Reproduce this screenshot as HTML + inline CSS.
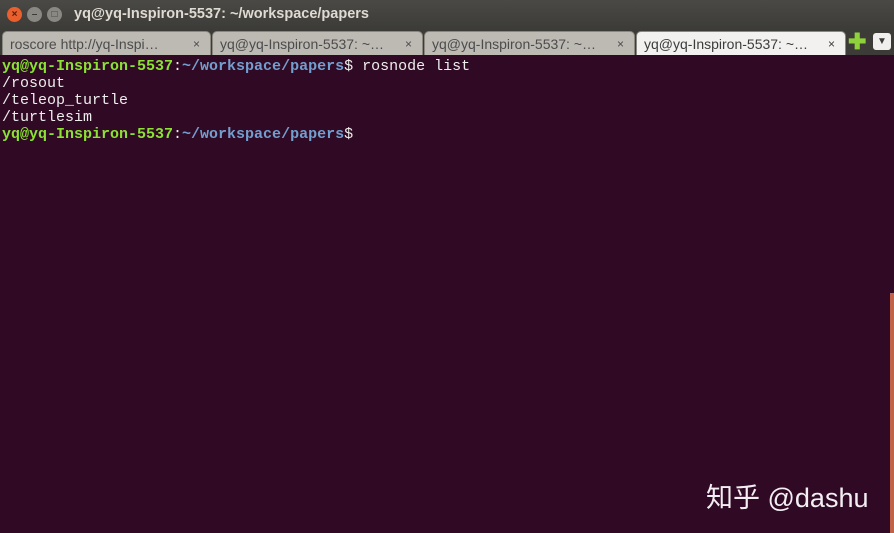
<!DOCTYPE html>
<html><head><meta charset="utf-8"><style>
body{margin:0;width:894px;height:533px;overflow:hidden;background:#300a24;font-family:"Liberation Sans",sans-serif;position:relative}
.title{position:absolute;left:0;top:0;width:894px;height:30px;background:linear-gradient(#4a4945,#3c3b37);}
.title .t{position:absolute;left:74px;top:6px;color:#dfdbd2;font-size:14.5px;font-weight:bold}
.btn{position:absolute;top:7px;width:15px;height:15px;border-radius:50%;font-size:10px;line-height:15px;text-align:center;font-weight:bold}
.tabs{position:absolute;left:0;top:30px;width:894px;height:25px;background:#3c3b37}
.tab{position:absolute;top:1px;height:24px;background:#bdbab4;border-radius:5px 5px 0 0;border:1px solid #8a877f;border-bottom:none;box-sizing:border-box;color:#4c4c4c;font-size:14px;line-height:24px;padding-left:7px}
.tab .x{position:absolute;right:10px;top:0;font-size:12px}
.term{position:absolute;left:2px;top:58px;font-family:"Liberation Mono",monospace;font-size:15px;line-height:17px;color:#eeeeec;white-space:pre}
.g{color:#8ae234;font-weight:bold}.b{color:#729fcf;font-weight:bold}
</style></head><body>
<div class="title">
<div class="btn" style="left:7px;background:#e9602e;color:#4a2210">×</div>
<div class="btn" style="left:27px;background:#8a8882;color:#3c3b37">–</div>
<div class="btn" style="left:47px;background:#8a8882;color:#3c3b37">□</div>
<div class="t">yq@yq-Inspiron-5537: ~/workspace/papers</div>
</div>
<div class="tabs">
<div class="tab" style="left:2px;width:209px">roscore http://yq-Inspi…<span class="x">×</span></div>
<div class="tab" style="left:212px;width:211px">yq@yq-Inspiron-5537: ~…<span class="x">×</span></div>
<div class="tab" style="left:424px;width:211px">yq@yq-Inspiron-5537: ~…<span class="x">×</span></div>
<div class="tab" style="left:636px;width:210px;background:#f2f1f0;color:#3c3c3c">yq@yq-Inspiron-5537: ~…<span class="x">×</span></div>
<div style="position:absolute;left:848px;top:3px;color:#8fd13a;font-size:22px;font-weight:bold;line-height:18px">✚</div>
<div style="position:absolute;left:873px;top:3px;width:18px;height:17px;background:#f0efed;border-radius:3px;color:#3c3b37;font-size:10px;text-align:center;line-height:17px">▼</div>
</div>
<div class="term"><span class="g">yq@yq-Inspiron-5537</span>:<span class="b">~/workspace/papers</span>$ rosnode list
/rosout
/teleop_turtle
/turtlesim
<span class="g">yq@yq-Inspiron-5537</span>:<span class="b">~/workspace/papers</span>$ </div>
<div style="position:absolute;left:890px;top:293px;width:4px;height:240px;background:#c0614a"></div>
<div style="position:absolute;left:706px;top:476px;color:#f2eef2;font-size:27px;font-family:'Liberation Sans','Noto Sans CJK SC',sans-serif">知乎 @dashu</div>
</body></html>
